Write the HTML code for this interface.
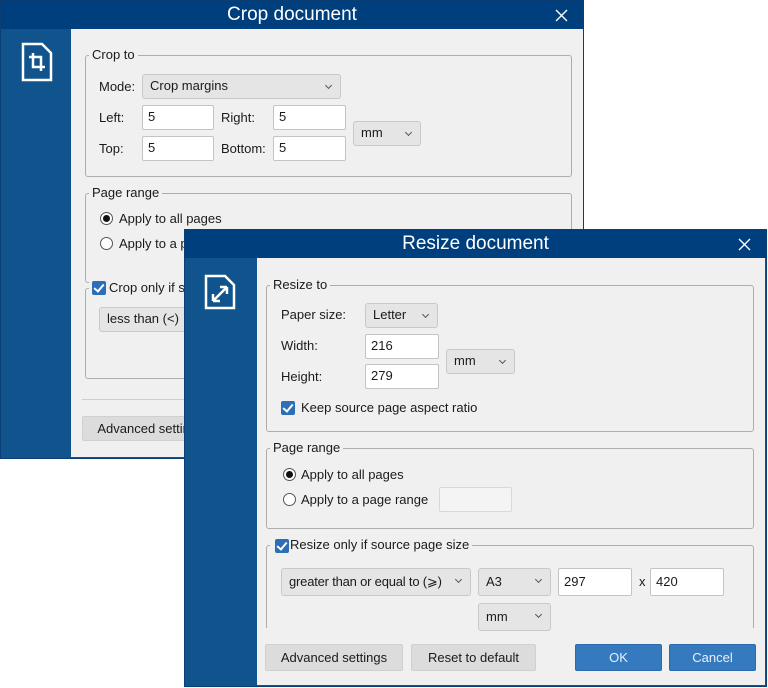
<!DOCTYPE html>
<html><head><style>
*{box-sizing:border-box;margin:0;padding:0}
body{width:768px;height:688px;background:#fff;position:relative;overflow:hidden;font-family:"Liberation Sans",sans-serif;font-size:13px;color:#1a1a1a}
.a{position:absolute}
.dlg{position:absolute;background:#11538d;border:1px solid #0a3e75}
.tb{position:absolute;left:0;right:0;top:0;height:28px;background:#003f7d;color:#fff;font-size:19px;text-align:center;line-height:28px}
.cont{position:absolute;background:#f0f0f0}
.fs{position:absolute;border:1px solid #adadad;border-radius:3px}
.lg{position:absolute;background:#f0f0f0;padding:0 3px;top:-9px;left:3px;line-height:16px;white-space:nowrap}
.inp{position:absolute;background:#fff;border:1px solid #c4c4c4;border-radius:2px;padding-left:5px;line-height:22px}
.sel{position:absolute;background:#e5e5e5;border:1px solid #c8c8c8;border-radius:3px;padding-left:7px;line-height:22px}
.sel:after{content:"";position:absolute;right:9px;top:8px;width:4px;height:4px;border-right:1px solid #555;border-bottom:1px solid #555;transform:rotate(45deg)}
.t{position:absolute;white-space:nowrap;line-height:16px}
.rad{position:absolute;width:13px;height:13px;border:1px solid #555;border-radius:50%;background:#fff}
.rad.on:after{content:"";position:absolute;left:2px;top:2px;width:7px;height:7px;border-radius:50%;background:#111}
.cb{position:absolute;width:14px;height:14px;background:#2c6fb6;border-radius:2px}
.cb:after{content:"";position:absolute;left:4px;top:1px;width:4px;height:8px;border-right:2px solid #fff;border-bottom:2px solid #fff;transform:rotate(40deg)}
.btn{position:absolute;background:#dcdcdc;border:1px solid #d0d0d0;border-radius:2px;text-align:center;line-height:24px}
.bb{background:#3579bf;color:#e8f0f8;border-color:#2c6aab}
</style></head><body>

<!-- Crop dialog -->
<div class="dlg" style="left:0;top:0;width:584px;height:459px">
 <div class="tb">Crop document</div>
 <svg class="a" style="left:554px;top:8px" width="13" height="13" viewBox="0 0 13 13"><path d="M1 1L12 12M12 1L1 12" stroke="#fff" stroke-width="1.4"/></svg>
 <svg class="a" style="left:20px;top:41px" width="32" height="40" viewBox="0 0 32 40"><path d="M2 2H21L30 11V38H2Z" fill="none" stroke="#fff" stroke-width="2.5"/><path d="M12 11V25H24M8 15H20V29" fill="none" stroke="#fff" stroke-width="2.5"/></svg>
 <div class="cont" style="left:70px;top:28px;width:512px;height:428px">
  <div class="fs" style="left:14px;top:26px;width:487px;height:122px"><div class="lg">Crop to</div></div>
  <div class="t" style="left:28px;top:50px">Mode:</div>
  <div class="sel" style="left:71px;top:45px;width:199px;height:25px">Crop margins</div>
  <div class="t" style="left:28px;top:81px">Left:</div>
  <div class="inp" style="left:71px;top:76px;width:72px;height:25px">5</div>
  <div class="t" style="left:150px;top:81px">Right:</div>
  <div class="inp" style="left:202px;top:76px;width:73px;height:25px">5</div>
  <div class="sel" style="left:282px;top:92px;width:68px;height:25px">mm</div>
  <div class="t" style="left:28px;top:112px">Top:</div>
  <div class="inp" style="left:71px;top:107px;width:72px;height:25px">5</div>
  <div class="t" style="left:150px;top:112px">Bottom:</div>
  <div class="inp" style="left:202px;top:107px;width:73px;height:25px">5</div>
  <div class="fs" style="left:14px;top:164px;width:487px;height:90px"><div class="lg">Page range</div></div>
  <div class="rad on" style="left:29px;top:183px"></div>
  <div class="t" style="left:48px;top:182px">Apply to all pages</div>
  <div class="rad" style="left:29px;top:208px"></div>
  <div class="t" style="left:48px;top:207px">Apply to a page range</div>
  <div class="fs" style="left:14px;top:259px;width:487px;height:91px"><div class="lg" style="padding-left:20px">Crop only if source page size</div></div>
  <div class="cb" style="left:21px;top:252px"></div>
  <div class="sel" style="left:28px;top:278px;width:140px;height:25px">less than (&lt;)</div>
  <div class="a" style="left:11px;top:370px;width:490px;height:1px;background:#cfcfcf"></div>
  <div class="btn" style="left:11px;top:387px;width:137px;height:25px">Advanced settings</div>
 </div>
</div>

<!-- Resize dialog -->
<div class="dlg" style="left:184px;top:229px;width:583px;height:458px">
 <div class="tb">Resize document</div>
 <svg class="a" style="left:553px;top:8px" width="13" height="13" viewBox="0 0 13 13"><path d="M1 1L12 12M12 1L1 12" stroke="#fff" stroke-width="1.4"/></svg>
 <svg class="a" style="left:19px;top:44px" width="32" height="36" viewBox="0 0 32 36"><path d="M2 2H21L30 11V34H2Z" fill="none" stroke="#fff" stroke-width="2.5"/><path d="M9 27L23 13M9 27V20M9 27H16M23 13V20M23 13H16" fill="none" stroke="#fff" stroke-width="2.5"/></svg>
 <div class="cont" style="left:72px;top:28px;width:508px;height:427px">
  <div class="fs" style="left:9px;top:27px;width:488px;height:147px"><div class="lg">Resize to</div></div>
  <div class="t" style="left:24px;top:49px">Paper size:</div>
  <div class="sel" style="left:108px;top:45px;width:73px;height:25px">Letter</div>
  <div class="t" style="left:24px;top:80px">Width:</div>
  <div class="inp" style="left:108px;top:76px;width:74px;height:25px">216</div>
  <div class="sel" style="left:189px;top:91px;width:69px;height:25px">mm</div>
  <div class="t" style="left:24px;top:111px">Height:</div>
  <div class="inp" style="left:108px;top:106px;width:74px;height:25px">279</div>
  <div class="cb" style="left:24px;top:143px"></div>
  <div class="t" style="left:44px;top:142px">Keep source page aspect ratio</div>
  <div class="fs" style="left:9px;top:190px;width:488px;height:81px"><div class="lg">Page range</div></div>
  <div class="rad on" style="left:26px;top:210px"></div>
  <div class="t" style="left:44px;top:209px">Apply to all pages</div>
  <div class="rad" style="left:26px;top:235px"></div>
  <div class="t" style="left:44px;top:234px">Apply to a page range</div>
  <div class="inp" style="left:182px;top:229px;width:73px;height:25px;background:#f4f4f4;border-color:#d8d8d8"></div>
  <div class="fs" style="left:9px;top:287px;width:488px;height:90px;border-bottom:none;border-radius:3px 3px 0 0"><div class="lg" style="padding-left:20px">Resize only if source page size</div></div>
  <div class="a" style="left:9px;top:370px;width:488px;height:8px;background:#f0f0f0"></div>
  <div class="cb" style="left:18px;top:281px"></div>
  <div class="sel" style="left:24px;top:310px;width:190px;height:28px;line-height:26px;letter-spacing:-0.2px">greater than or equal to (⩾)</div>
  <div class="sel" style="left:221px;top:310px;width:73px;height:28px;line-height:26px">A3</div>
  <div class="inp" style="left:301px;top:310px;width:74px;height:28px;line-height:26px">297</div>
  <div class="t" style="left:382px;top:316px">x</div>
  <div class="inp" style="left:393px;top:310px;width:74px;height:28px;line-height:26px">420</div>
  <div class="sel" style="left:221px;top:345px;width:73px;height:28px;line-height:26px">mm</div>
  <div class="btn" style="left:8px;top:386px;width:138px;height:27px;line-height:25px">Advanced settings</div>
  <div class="btn" style="left:154px;top:386px;width:125px;height:27px;line-height:25px">Reset to default</div>
  <div class="btn bb" style="left:318px;top:386px;width:87px;height:27px;line-height:25px">OK</div>
  <div class="btn bb" style="left:412px;top:386px;width:87px;height:27px;line-height:25px">Cancel</div>
 </div>
</div>
</body></html>
